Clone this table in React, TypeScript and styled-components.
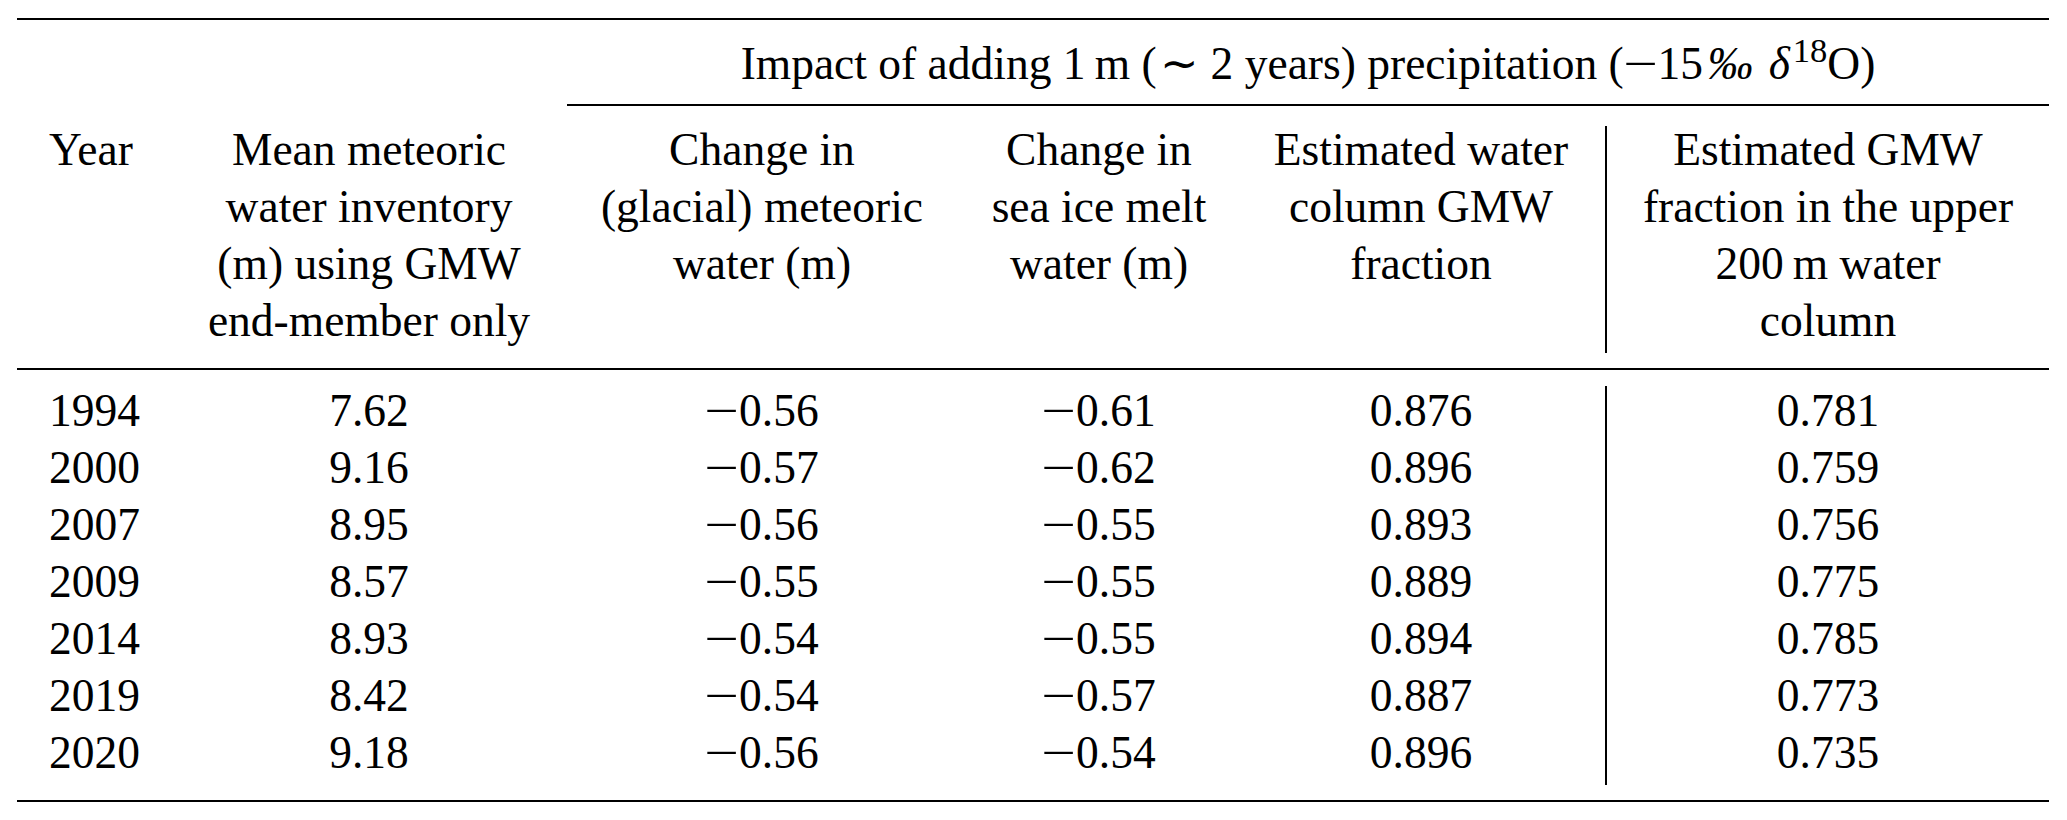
import React from "react";
import styled, { createGlobalStyle } from "styled-components";

const GlobalStyle = createGlobalStyle`
  html, body {
    margin: 0;
    padding: 0;
    background: #ffffff;
  }
  body {
    font-family: "Liberation Serif", "Times New Roman", Times, serif;
    color: #000000;
  }
`;

const COLS = "159px 386px 400px 274px 370px 443px";

const Table = styled.div`
  width: 2032px;
  margin: 18px 0 0 17px;
  border-top: 2px solid #000;
  border-bottom: 2px solid #000;
  font-family: "Liberation Serif", "Times New Roman", Times, serif;
  font-size: 45.5px;
`;

const Grid = styled.div`
  display: grid;
  grid-template-columns: ${COLS};
`;

const SpanRow = styled(Grid)`
  padding-top: 15px;
`;

const SpanCell = styled.div`
  grid-column: 3 / 7;
  margin-left: 5px;
  text-align: center;
  line-height: 57px;
  padding-bottom: 12px;
  border-bottom: 2px solid #000;
  white-space: nowrap;
`;

const Delta = styled.i`
  font-style: italic;
`;

const Sup = styled.sup`
  font-size: 0.76em;
  line-height: 0;
  vertical-align: 0.5em;
  margin-left: 0.08em;
`;

const PerMille = styled.span`
  display: inline-block;
  width: 1.2em;
  text-align: center;
  font-style: italic;
`;

const Minus = styled.span`
  display: inline-block;
  width: 0.74em;
  text-align: center;
  transform: scaleX(1.35);
`;

const Tilde = styled.span`
  display: inline-block;
  margin-left: 0.08em;
`;

const HeaderRow = styled(Grid)`
  padding: 20px 0 15px;
  border-bottom: 2px solid #000;
`;

const HeadCell = styled.div<{ $align?: "left" | "center"; $divider?: boolean }>`
  text-align: ${(p) => p.$align ?? "center"};
  padding-left: ${(p) => (p.$align === "left" ? "32px" : "0")};
  padding-bottom: 4px;
  border-left: ${(p) => (p.$divider ? "2px solid #000" : "none")};
  margin-left: ${(p) => (p.$divider ? "-1px" : "0")};
`;

const HeadText = styled.div`
  margin-top: -5px;
  line-height: 57px;
  white-space: nowrap;
`;

const Body = styled(Grid)`
  padding: 16px 0 15px;
`;

const Cell = styled.div<{ $align?: "left" | "center"; $divider?: boolean }>`
  text-align: ${(p) => p.$align ?? "center"};
  padding-left: ${(p) => (p.$align === "left" ? "32px" : "0")};
  line-height: 49px;
  padding-bottom: 8px;
  white-space: nowrap;
  border-left: ${(p) => (p.$divider ? "2px solid #000" : "none")};
  margin-left: ${(p) => (p.$divider ? "-1px" : "0")};
`;

const headers: { lines: string[]; align?: "left" | "center"; divider?: boolean }[] = [
  { lines: ["Year"], align: "left" },
  { lines: ["Mean meteoric", "water inventory", "(m) using GMW", "end-member only"] },
  { lines: ["Change in", "(glacial) meteoric", "water (m)"] },
  { lines: ["Change in", "sea ice melt", "water (m)"] },
  { lines: ["Estimated water", "column GMW", "fraction"] },
  { lines: ["Estimated GMW", "fraction in the upper", "200\u2009m water", "column"], divider: true },
];

const rows: string[][] = [
  ["1994", "7.62", "\u22120.56", "\u22120.61", "0.876", "0.781"],
  ["2000", "9.16", "\u22120.57", "\u22120.62", "0.896", "0.759"],
  ["2007", "8.95", "\u22120.56", "\u22120.55", "0.893", "0.756"],
  ["2009", "8.57", "\u22120.55", "\u22120.55", "0.889", "0.775"],
  ["2014", "8.93", "\u22120.54", "\u22120.55", "0.894", "0.785"],
  ["2019", "8.42", "\u22120.54", "\u22120.57", "0.887", "0.773"],
  ["2020", "9.18", "\u22120.56", "\u22120.54", "0.896", "0.735"],
];

function Num({ value }: { value: string }) {
  if (value.startsWith("\u2212")) {
    return (
      <>
        <Minus>{"\u2212"}</Minus>
        {value.slice(1)}
      </>
    );
  }
  return <>{value}</>;
}

export default function App() {
  return (
    <>
      <GlobalStyle />
      <Table>
        <SpanRow>
          <SpanCell>
            Impact of adding 1{"\u2009"}m (<Tilde>{"\u223C"}</Tilde> 2 years) precipitation (
            <Minus>{"\u2212"}</Minus>15<PerMille>{"\u2030"}</PerMille>{" "}
            <Delta>{"\u03B4"}</Delta>
            <Sup>18</Sup>O)
          </SpanCell>
        </SpanRow>
        <HeaderRow>
          {headers.map((h, i) => (
            <HeadCell key={i} $align={h.align} $divider={h.divider}>
              <HeadText>
                {h.lines.map((l, j) => (
                  <div key={j}>{l}</div>
                ))}
              </HeadText>
            </HeadCell>
          ))}
        </HeaderRow>
        <Body>
          {rows.map((r, i) =>
            r.map((v, j) => (
              <Cell key={`${i}-${j}`} $align={j === 0 ? "left" : "center"} $divider={j === 5}>
                <Num value={v} />
              </Cell>
            ))
          )}
        </Body>
      </Table>
    </>
  );
}
